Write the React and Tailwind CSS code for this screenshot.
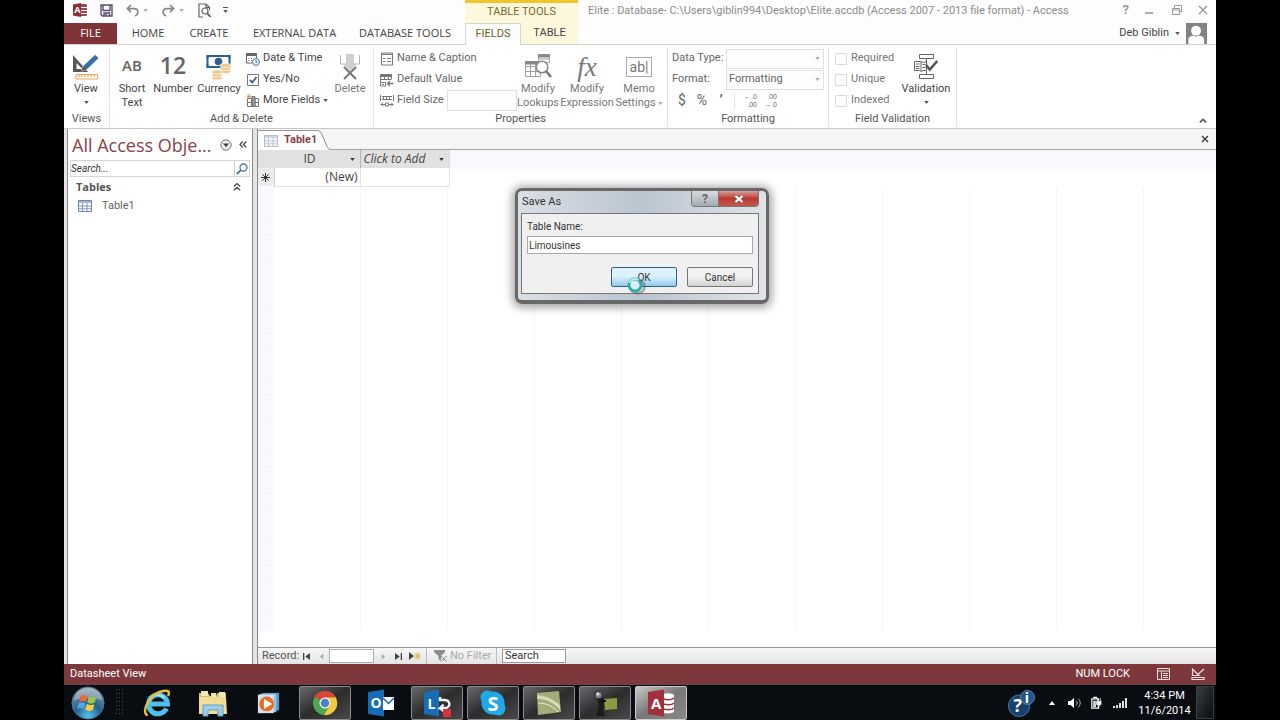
import React from "react";

function Caret({ className = "fill-[#555]" }) {
  return (
    <svg viewBox="0 0 6 4" className={"h-[3px] w-[5px] shrink-0 " + className} aria-hidden="true">
      <path d="M0 0h6L3 4z" />
    </svg>
  );
}

/* ---------- Title bar icons ---------- */

function AccessSmall() {
  return (
    <svg viewBox="0 0 16 14" className="h-[14px] w-4" aria-hidden="true">
      <g fill="#8f4a4f">
        <path d="M9 1h5l1 1v2H9zM9 5h6v2H9zM9 8h6v2H9zM9 11h6v1l-1 1H9z" />
      </g>
      <path d="M1 1.5 9 0v14l-8-1.5z" fill="#8c2f37" />
      <text x="2.2" y="10.4" fontSize="9" fontWeight="700" fill="#fff" fontFamily="Open Sans, sans-serif">A</text>
    </svg>
  );
}

function SaveIcon() {
  return (
    <svg viewBox="0 0 13 13" className="h-[13px] w-[13px]" fill="none" stroke="#5b4d6e" strokeWidth="1.4" aria-hidden="true">
      <path d="M1 1h11v11H2.5L1 10.5zM3 1v5.5h7V1M4 12V9h5.5v3" />
      <path d="M5.2 9.4h1.6v2.2H5.2z" fill="#5b4d6e" stroke="none" />
    </svg>
  );
}

function UndoIcon({ flip }) {
  return (
    <svg viewBox="0 0 13 13" className={"h-[13px] w-[13px] " + (flip ? "-scale-x-100" : "")} fill="none" stroke="#8a8790" strokeWidth="1.7" aria-hidden="true">
      <path d="M5 1 1.4 4.6 5 8.2M1.6 4.6H8c5 0 5 5.5 1 7.4" />
    </svg>
  );
}

function PreviewIcon() {
  return (
    <svg viewBox="0 0 13 15" className="h-[15px] w-[13px]" fill="none" stroke="#666" strokeWidth="1.2" aria-hidden="true">
      <path d="M5 14H1V1h7l3.5 3.5V7M8 1v3.5h3" />
      <circle cx="7" cy="8" r="3" />
      <path d="m9.3 10.3 3.2 3.6" strokeWidth="1.8" />
    </svg>
  );
}

/* ---------- Ribbon icons ---------- */

function ViewIcon() {
  return (
    <svg viewBox="0 0 28 28" className="h-7 w-7" aria-hidden="true">
      <path d="M1 2v17h15zM4.5 10l6 6h-6z" fill="#55565a" fillRule="evenodd" />
      <path d="m9.500 18 1.500-5L23 1.500l4 3.500-12 11.500z" fill="#3b6ea5" stroke="#fff" strokeWidth=".7" />
      <path d="m9.500 18 1.500-5 3.800 3.500z" fill="#5c5c5c" />
      <path d="M4 21.500h21.500v4.500H4z" fill="#fff8ee" stroke="#e2a96b" />
      <path d="M7 22v2M10 22v2M13 22v2M16 22v2M19 22v2M22 22v2" stroke="#d99a56" />
    </svg>
  );
}

function CurrencyIcon() {
  return (
    <svg viewBox="0 0 28 28" className="h-7 w-7" aria-hidden="true">
      <path d="M2.500 3h22v11h-22z" fill="#fff" stroke="#2f5f95" strokeWidth="2" />
      <path d="M1.500 2h5l-5 4.500zM25.500 2h-5l5 4.500zM1.500 15h5l-5-4.500z" fill="#2f5f95" />
      <circle cx="13.500" cy="8.500" r="3.800" fill="#2f5f95" />
      <g fill="#edc98d" stroke="#fff" strokeWidth=".7">
        <ellipse cx="20.500" cy="18.500" rx="5.500" ry="2.100" />
        <ellipse cx="20.500" cy="15.500" rx="5.500" ry="2.100" />
        <ellipse cx="20.500" cy="12.500" rx="5.500" ry="2.100" />
        <ellipse cx="12" cy="25" rx="5.500" ry="2" />
        <ellipse cx="12" cy="22" rx="5.500" ry="2" />
        <ellipse cx="12" cy="19" rx="5.500" ry="2" />
      </g>
    </svg>
  );
}

function DateIcon() {
  return (
    <svg viewBox="0 0 14 14" className="h-[14px] w-[14px] shrink-0" fill="none" stroke="#666" aria-hidden="true">
      <path d="M.5 1.500h10v2H.5z" fill="#666" />
      <path d="M.5 1.500v9.500H6M10.500 4v2M2.500 6.500h1M5 6.500h1M2.500 8.500h1M5 8.500h1" />
      <circle cx="10" cy="10" r="3.400" stroke="#3b6ea5" fill="#fff" />
      <path d="M10 8v2.300h1.600" stroke="#3b6ea5" />
    </svg>
  );
}

function CheckBoxIcon() {
  return (
    <svg viewBox="0 0 14 14" className="h-[14px] w-[14px] shrink-0" fill="none" aria-hidden="true">
      <path d="M1.500 1.500h11v11h-11z" stroke="#777" />
      <path d="m4 6.800 2.200 2.700L10.500 4" stroke="#3a5f8a" strokeWidth="1.800" />
    </svg>
  );
}

function MoreFieldsIcon() {
  return (
    <svg viewBox="0 0 14 14" className="h-[14px] w-[14px] shrink-0" fill="none" stroke="#777" aria-hidden="true">
      <path d="M1.500 4.500h11v8h-11zM5.500 4v8M9 4v8M2 8.500h10" />
      <path d="M6 2.500h3V12H6z" fill="#999" />
      <path d="M3 0v5M.5 2.500h5M1.200.8l3.600 3.400M4.800.8 1.200 4.200" stroke="#b98a55" strokeWidth=".7" />
    </svg>
  );
}

function DeleteIcon() {
  return (
    <svg viewBox="0 0 24 28" className="h-7 w-6" fill="none" aria-hidden="true">
      <path d="M2.500 2v9H8M21.500 2v9H16" stroke="#b5b5b5" />
      <path d="M8 1h8v10h3l-7 7-7-7h3z" fill="#cfcfcf" />
      <path d="m6 14 12 12M18 14 6 26" stroke="#777" strokeWidth="2" />
    </svg>
  );
}

function CaptionIcon() {
  return (
    <svg viewBox="0 0 14 14" className="h-[14px] w-[14px] shrink-0" fill="none" stroke="#777" aria-hidden="true">
      <path d="M1.500 1h11v12h-11zM1.500 2.500h11M3 6.500h2.500M7 6.500h4M3 9.500h2.500M7 9.500h4" />
    </svg>
  );
}

function DefaultIcon() {
  return (
    <svg viewBox="0 0 14 14" className="h-[14px] w-[14px] shrink-0" fill="none" stroke="#777" aria-hidden="true">
      <path d="M.5 1.500h11v2H.5z" fill="#777" />
      <path d="M.5 3v6M4.500 3v4M8.500 3v4M11.500 3v3M.5 6.500h11M.5 9.500h5v3.500h-5zM2 11.300h2" />
      <path d="M13.500 10.500H8M10 8l-2.500 2.500L10 13" strokeWidth="1.300" />
    </svg>
  );
}

function SizeIcon() {
  return (
    <svg viewBox="0 0 14 14" className="h-[14px] w-[14px] shrink-0" fill="none" stroke="#777" aria-hidden="true">
      <path d="M.5 1v6M13.500 1v6M2 2.500h10M2 5.500h10M3.500 2v3M6.500 2v3M9.500 2v3" />
      <path d="M1 10.500h4M9 10.500h4M3 8.500l-2 2 2 2M11 8.500l2 2-2 2M5.500 9h3v3h-3z" />
    </svg>
  );
}

function LookupIcon() {
  return (
    <svg viewBox="0 0 28 28" className="h-7 w-7" fill="none" stroke="#a0a0a0" aria-hidden="true">
      <path d="M14.500 1.500h11v8h-11zM14.500 6h11" />
      <path d="M14.500 1.500h11v2.500h-11z" fill="#888" stroke="#888" />
      <path d="M1.500 8.500h15v15h-15zM1.500 13.500h15M1.500 18.500h15M6.500 9v14M11.500 9v14" />
      <path d="M1.500 8.500h13v2.500h-13z" fill="#888" stroke="#888" />
      <circle cx="18" cy="14" r="5.800" fill="#fff" stroke="#888" strokeWidth="1.600" />
      <path d="m22 18 5 6" stroke="#777" strokeWidth="2.500" />
    </svg>
  );
}

function ValidationIcon() {
  return (
    <svg viewBox="0 0 28 28" className="h-7 w-7" fill="none" stroke="#666" aria-hidden="true">
      <path d="M7.500 1.500h14v4h-14zM7.500 21.500h14v4h-14zM14.500 6v4M14.500 18v3.500" fill="#fff" />
      <path d="M2.500 8.500h6l3 1 3-1v9h-3l-2 1-2-1h-5zM9 9v9M4 11h3.500M4 13.500h3.500M4 15.500h3.500M10.500 11.500h3M10.500 14.500h3" />
      <path d="m14 12 3.800 4.500 7.500-8.500" stroke="#555" strokeWidth="2.600" />
    </svg>
  );
}

/* ---------- Ribbon building blocks ---------- */

function BigButton({ icon, label, width, muted, menu }) {
  return (
    <button type="button" className={"flex flex-col items-center pt-1 leading-[14px] " + width + (muted ? " text-[#777]" : "")}>
      <span className="flex h-[30px] items-center justify-center">{icon}</span>
      {label.map((line) => (
        <span key={line} className="flex items-center gap-[2px] whitespace-nowrap">
          {line}
          {menu === line && <Caret className="fill-[#aaa]" />}
        </span>
      ))}
      {menu === true && <span className="flex h-[13px] items-center"><Caret /></span>}
    </button>
  );
}

function SmallButton({ icon, label, muted, menu }) {
  return (
    <button type="button" className={"flex h-[21px] items-center gap-[3px] whitespace-nowrap " + (muted ? "text-[#666]" : "")}>
      {icon}
      {label}
      {menu && <Caret />}
    </button>
  );
}

function Group({ title, width, children }) {
  return (
    <section className={"flex shrink-0 flex-col pt-[3px] pb-px " + width}>
      <div className="flex flex-1 border-r border-[#e2e2e2]">{children}</div>
      <h2 className="h-4 border-r border-[#e2e2e2] text-center leading-4 text-[#555]">{title}</h2>
    </section>
  );
}

function DropDown({ id, value }) {
  return (
    <div className="relative h-[20px] w-[98px] shrink-0">
      <select id={id} className="h-full w-full appearance-none border border-[#e0e0e0] bg-[#fdfdfd] px-[2px] text-[11px] text-[#666]" defaultValue={value}>
        <option>{value}</option>
      </select>
      <span className="pointer-events-none absolute top-2 right-1 flex"><Caret className="fill-[#aaa]" /></span>
    </div>
  );
}

function Header() {
  return (
    <header className="flex h-[45px] border-b border-[#d0d0d0] bg-[#fdfdfd]">
      <div className="flex w-[401px] shrink-0 flex-col">
        <div className="flex h-[23px] items-center pb-[3px] pl-2">
          <AccessSmall />
          <button type="button" aria-label="Save" className="ml-3"><SaveIcon /></button>
          <button type="button" aria-label="Undo" className="ml-[13px] flex items-center gap-1"><UndoIcon /><Caret className="fill-[#aaa]" /></button>
          <button type="button" aria-label="Redo" className="ml-[14px] flex items-center gap-1"><UndoIcon flip /><Caret className="fill-[#aaa]" /></button>
          <button type="button" aria-label="Print Preview" className="ml-[14px]"><PreviewIcon /></button>
          <button type="button" aria-label="Customize toolbar" className="ml-3 flex flex-col items-center gap-[2px]">
            <span className="h-px w-[5px] bg-[#555]" />
            <Caret />
          </button>
        </div>
        <nav className="flex flex-1 font-['Open_Sans',sans-serif] text-[#444]">
          <button type="button" className="w-[53px] bg-[#80343a] text-white">FILE</button>
          <button type="button" className="ml-[2px] w-[58px]">HOME</button>
          <button type="button" className="w-16">CREATE</button>
          <button type="button" className="w-[107px]">EXTERNAL DATA</button>
          <button type="button" className="w-[114px]">DATABASE TOOLS</button>
        </nav>
      </div>
      <div className="flex w-[113px] shrink-0 flex-col border-t-[3px] border-[#f0c52e] bg-[#fdf8dc]">
        <div className="h-5 text-center leading-[18px] text-[#7a6a2a]">TABLE TOOLS</div>
        <div className="flex h-[22px]">
          <button type="button" className="-mb-px h-[22px] w-14 border border-b-0 border-[#d5d5d5] bg-[#fdfdfd] text-[#6e5f25]">FIELDS</button>
          <button type="button" className="flex-1 text-[#444]">TABLE</button>
        </div>
      </div>
      <div className="flex flex-1 flex-col">
        <div className="flex h-[23px] items-center pr-2 pl-[10px]">
          <h1 className="flex-1 whitespace-nowrap text-[#8c8c8c]">
            Elite : Database- C:\Users\giblin994\Desktop\Elite.accdb (Access 2007 - 2013 file format) - Access
          </h1>
          <div className="flex items-center gap-4 pb-1 text-[#999]">
            <button type="button" aria-label="Help" className="text-[13px] leading-4 font-bold">?</button>
            <button type="button" aria-label="Minimize" className="flex h-2 w-[10px] items-end">
              <span className="h-[2px] w-2 bg-[#aaa]" />
            </button>
            <button type="button" aria-label="Restore">
              <svg viewBox="0 0 11 10" className="h-[10px] w-[11px]" fill="none" stroke="#999"><path d="M1.500 3.500h7v6h-7zM1.500 5h7M3.500 3V.5h7v6H9" /></svg>
            </button>
            <button type="button" aria-label="Close">
              <svg viewBox="0 0 10 10" className="h-[10px] w-[10px]" stroke="#999" strokeWidth="1.400"><path d="m1 1 8 8M9 1 1 9" /></svg>
            </button>
          </div>
        </div>
        <button type="button" className="flex h-[21px] items-center justify-end pr-[9px] text-[#444]">
          <span className="mr-[6px]">Deb Giblin</span>
          <Caret />
          <svg viewBox="0 0 22 22" className="ml-[6px] h-[21px] w-[21px]" aria-hidden="true">
            <path d="M0 0h22v22H0z" fill="#828282" />
            <circle cx="10.500" cy="8" r="5.200" fill="#fff" />
            <path d="M2.500 22v-5c0-2.500 3-3.500 5-4l3 1.500 3-1.500c3 .5 5.500 1.500 5.500 4v5z" fill="#fff" />
          </svg>
        </button>
      </div>
    </header>
  );
}

function Ribbon() {
  return (
    <div className="flex h-[84px] border-b border-[#c9c9c9] bg-white text-[#444]">
      <Group title="Views" width="w-[46px]">
        <BigButton icon={<ViewIcon />} label={["View"]} width="w-[44px]" menu />
      </Group>
      <Group title="Add & Delete" width="w-[264px]">
        <BigButton icon={<span className="pb-1 font-['Open_Sans',sans-serif] text-[15px] font-semibold text-[#666]">AB</span>} label={["Short", "Text"]} width="ml-1 w-[36px]" />
        <BigButton icon={<span className="pb-1 font-['Open_Sans',sans-serif] text-[23px] font-semibold text-[#666]">12</span>} label={["Number"]} width="w-[46px]" />
        <BigButton icon={<CurrencyIcon />} label={["Currency"]} width="w-[46px]" />
        <div className="ml-1 w-[81px]">
          <SmallButton icon={<DateIcon />} label="Date & Time" />
          <SmallButton icon={<CheckBoxIcon />} label="Yes/No" />
          <SmallButton icon={<MoreFieldsIcon />} label="More Fields" menu />
        </div>
        <BigButton icon={<DeleteIcon />} label={["Delete"]} width="ml-1 w-[38px]" muted />
      </Group>
      <Group title="Properties" width="w-[294px]">
        <div className="ml-[6px] w-[136px]">
          <SmallButton icon={<CaptionIcon />} label="Name & Caption" muted />
          <SmallButton icon={<DefaultIcon />} label="Default Value" muted />
          <div className="flex h-[21px] items-center gap-[3px] text-[#666]">
            <SizeIcon />
            <label htmlFor="field-size" className="whitespace-nowrap">Field Size</label>
            <input id="field-size" className="mr-[2px] ml-auto h-[21px] w-[70px] border border-[#e0e0e0] bg-[#fdfdfd]" />
          </div>
        </div>
        <BigButton icon={<LookupIcon />} label={["Modify", "Lookups"]} width="w-[44px]" muted />
        <BigButton icon={<span className="font-['Liberation_Serif',serif] text-[27px] italic">fx</span>} label={["Modify", "Expression"]} width="w-[54px]" muted />
        <BigButton icon={<span className="flex h-5 w-[26px] items-center justify-center border border-[#aaa] text-[14px]">ab|</span>} label={["Memo", "Settings"]} width="w-[50px]" muted menu="Settings" />
      </Group>
      <Group title="Formatting" width="w-[161px]">
        <div className="ml-1 flex-1 pr-1 text-[#666]">
          <div className="flex h-[21px] items-center justify-between">
            <label htmlFor="data-type" className="whitespace-nowrap">Data Type:</label>
            <DropDown id="data-type" value="" />
          </div>
          <div className="flex h-[21px] items-center justify-between">
            <label htmlFor="format">Format:</label>
            <DropDown id="format" value="Formatting" />
          </div>
          <div className="flex h-[21px] items-center">
            <button type="button" aria-label="Currency" className="w-5 text-[14px]">$</button>
            <button type="button" aria-label="Percent" className="w-5 text-[14px]">%</button>
            <button type="button" aria-label="Comma" className="w-[18px] text-[14px] font-bold">’</button>
            <span className="mx-1 h-4 w-px bg-[#e2e2e2]" />
            <button type="button" aria-label="Increase Decimals" className="flex w-[18px] flex-col items-end font-['Liberation_Sans',sans-serif] text-[7px] leading-[8px]"><span>←.0</span><span>.00</span></button>
            <button type="button" aria-label="Decrease Decimals" className="flex w-5 flex-col items-end font-['Liberation_Sans',sans-serif] text-[7px] leading-[8px]"><span>.00</span><span>→.0</span></button>
          </div>
        </div>
      </Group>
      <Group title="Field Validation" width="w-[128px]">
        <div className="ml-[6px] w-[66px]">
          {["Required", "Unique", "Indexed"].map((t) => (
            <label key={t} className="flex h-[21px] items-center gap-1 text-[#777]">
              <input type="checkbox" className="h-3 w-3 appearance-none border border-[#dcdcdc] bg-[#fdfdfd]" />
              {t}
            </label>
          ))}
        </div>
        <BigButton icon={<ValidationIcon />} label={["Validation"]} width="w-[50px]" menu />
      </Group>
      <button type="button" aria-label="Collapse Ribbon" className="mr-[9px] mb-[5px] ml-auto self-end">
        <svg viewBox="0 0 8 5" className="h-[5px] w-2" fill="none" stroke="#555" strokeWidth="1.500"><path d="m.8 4.400 3.200-3 3.200 3" /></svg>
      </button>
    </div>
  );
}

function GridIcon({ className }) {
  return (
    <svg viewBox="0 0 14 12" className={"h-3 w-[14px] shrink-0 " + className} aria-hidden="true">
      <path d="M.5.5h13v11H.5z" fill="#f7fafd" stroke="currentColor" />
      <path d="M1 1h12v2H1z" fill="currentColor" opacity=".6" />
      <path d="M1 6h12M1 8.800h12M4.500 3v8.500M9 3v8.500" stroke="currentColor" strokeWidth=".8" />
    </svg>
  );
}

function NavigationPane() {
  return (
    <aside className="ml-[3px] flex w-[186px] shrink-0 flex-col border-x border-[#8a8a8a] bg-white">
      <div className="flex h-[31px] items-center pl-1">
        <h2 className="w-[145px] pt-[2px] font-['Open_Sans',sans-serif] text-[18px] whitespace-nowrap text-[#8a4248]">All Access Obje...</h2>
        <button type="button" aria-label="Filter objects" className="ml-[3px]">
          <svg viewBox="0 0 12 12" className="h-3 w-3"><circle cx="6" cy="6" r="5.200" fill="#eee" stroke="#777" /><path d="M3 4.500h6L6 8.200z" fill="#444" /></svg>
        </button>
        <button type="button" aria-label="Collapse pane" className="ml-[7px]">
          <svg viewBox="0 0 8 7" className="h-[7px] w-2" fill="none" stroke="#444" strokeWidth="1.200"><path d="M3.800.5 1 3.500l2.800 3M7.300.5l-2.800 3 2.800 3" /></svg>
        </button>
      </div>
      <div className="mr-[2px] ml-[2px] flex h-[17px] border border-[#d4d4d4]">
        <input aria-label="Search" placeholder="Search..." className="min-w-0 flex-1 text-[10px] italic placeholder:text-[#333]" />
        <button type="button" aria-label="Run search" className="flex w-[15px] items-center justify-center border-l border-[#d4d4d4]">
          <svg viewBox="0 0 12 12" className="h-3 w-3" fill="none" stroke="#4c7aa5"><circle cx="7.500" cy="4.500" r="3.500" strokeWidth="1.300" /><path d="m5 7-4 4" strokeWidth="2" /></svg>
        </button>
      </div>
      <button type="button" className="flex h-[20px] items-center justify-between pr-[11px] pl-2 font-['Open_Sans',sans-serif] font-bold text-[#555]">
        Tables
        <svg viewBox="0 0 8 8" className="h-2 w-2" fill="none" stroke="#444" strokeWidth="1.200"><path d="m.8 3.500 3.200-3 3.200 3M.8 7.300 4 4.300l3.200 3" /></svg>
      </button>
      <button type="button" className="flex h-[18px] items-center gap-[10px] pl-[10px] text-[#666]">
        <GridIcon className="text-[#6f86a0]" />
        Table1
      </button>
    </aside>
  );
}

function Datasheet() {
  return (
    <main className="ml-1 flex min-w-0 flex-1 flex-col border-l border-[#8a8a8a] bg-white">
      <div className="flex h-[21px] items-end justify-between border-b border-[#a5a5a5] bg-[#f5f5f5]">
        <div className="-mb-px flex h-5">
          <button type="button" className="flex h-5 items-center gap-[6px] border-t border-[#999] bg-white pl-[6px] font-bold text-[#8a3f45]">
            <GridIcon className="text-[#b9bcc4]" />
            Table1
          </button>
          <svg viewBox="0 0 14 20" className="h-5 w-[14px]" aria-hidden="true">
            <path d="M0 .5c3 0 4 2 5 4l5 12c1 2 2 3 4 3V20H0z" fill="#fff" />
            <path d="M0 .5c3 0 4 2 5 4l5 12c1 2 2 3 4 3" fill="none" stroke="#888" />
          </svg>
        </div>
        <button type="button" aria-label="Close Table1" className="mr-[7px] mb-[6px]">
          <svg viewBox="0 0 8 8" className="h-2 w-2" stroke="#333" strokeWidth="1.300"><path d="m1 1 6 6M7 1 1 7" /></svg>
        </button>
      </div>
      <div className="flex flex-1 flex-col">
        <div className="flex bg-linear-to-b from-[#f9f9fd] from-50% to-white to-50%">
          <table className="w-[192px] table-fixed border-collapse font-['Open_Sans',sans-serif] text-[12px] text-[#444]">
            <thead>
              <tr className="h-[18px] bg-[#e1e1e1]">
                <th className="w-4 p-0" aria-label="Row selector" />
                <th className="w-[86px] border-r border-[#b5b5b5] p-0 font-normal">
                  <div className="flex items-center justify-end gap-[34px] pr-[5px] leading-4">ID<Caret className="fill-[#333]" /></div>
                </th>
                <th className="p-0 font-normal italic">
                  <div className="flex items-center justify-between pr-[6px] pl-[3px] leading-4 whitespace-nowrap">Click to Add<Caret className="fill-[#333]" /></div>
                </th>
              </tr>
            </thead>
            <tbody>
              <tr className="h-[18px] bg-white">
                <td className="border-r border-[#ccc] bg-[#ececec] p-0">
                  <svg viewBox="0 0 9 9" className="mx-auto h-[9px] w-[9px]" stroke="#333"><path d="M4.500 0v9M0 4.500h9M1.300 1.300l6.400 6.400M7.700 1.300 1.300 7.700" /></svg>
                </td>
                <td className="border-r border-b border-[#e3e3e3] p-0 pr-[2px] text-right leading-4">(New)</td>
                <td className="border-r border-b border-[#e3e3e3] p-0" />
              </tr>
            </tbody>
          </table>
        </div>
        <div className="flex min-h-[200px] flex-1 pb-4">
          <div className="flex w-4 shrink-0 flex-col divide-y divide-[#f3f3f8] bg-[#f9f9fd]">
            {Array.from({ length: 25 }, (_, i) => <div key={i} className="flex-1" />)}
          </div>
          {Array.from({ length: 10 }, (_, i) => (
            <div key={i} className="w-[87px] border-r border-[#f7f7fa]" />
          ))}
        </div>
      </div>
      <RecordBar />
    </main>
  );
}

function RecordBar() {
  const back = [
    ["First record", "M0 0h1.500v8H0zM8 0v8L2.500 4z", "fill-[#444]"],
    ["Previous record", "M6 1v6L2 4z", "fill-[#aaa]"],
  ];
  const forward = [
    ["Next record", "M2 1v6l4-3z", "fill-[#aaa]"],
    ["Last record", "M0 0v8l5.500-4zM6.500 0H8v8H6.500z", "fill-[#444]"],
  ];
  const draw = ([name, d, fill]) => (
    <button key={name} type="button" aria-label={name} className="flex w-[15px] justify-center">
      <svg viewBox="0 0 8 8" className={"h-[7px] w-[7px] " + fill}><path d={d} /></svg>
    </button>
  );
  return (
    <div className="flex h-[17px] shrink-0 items-center border-t border-[#999] bg-linear-to-b from-[#f7f7f7] to-[#e4e4e4] pl-1 text-[#555]">
      <label htmlFor="record" className="w-[37px]">Record:</label>
      {back.map(draw)}
      <input id="record" className="h-[14px] w-[45px] border border-[#aaa] bg-white" />
      <span className="w-[2px]" />
      {forward.map(draw)}
      <button type="button" aria-label="New record" className="flex w-[18px] justify-center">
        <svg viewBox="0 0 12 8" className="h-2 w-3"><path d="M0 0v8l5-4z" fill="#444" /><path d="M8.500 0v8M5 4h7M6 1.200l5 5.600M11 1.200 6 6.800" stroke="#dcb84a" /></svg>
      </button>
      <span className="mr-[7px] ml-[2px] h-full w-px bg-[#bbb]" />
      <span className="flex items-center gap-[3px] text-[#aaa]">
        <svg viewBox="0 0 13 12" className="h-3 w-[13px]"><path d="M0 0h11v2L7 6v5L4.500 9V6L0 2z" fill="#8c8c8c" /><path d="m7 6 5.500 5.500M12.500 6 7 11.500" stroke="#888" /></svg>
        <span className="w-[42px] whitespace-nowrap">No Filter</span>
      </span>
      <span className="mr-[5px] ml-1 h-full w-px bg-[#bbb]" />
      <input aria-label="Search records" defaultValue="Search" className="h-[14px] w-[64px] border border-[#999] bg-white px-[2px] text-[#333]" />
    </div>
  );
}

function StatusBar() {
  return (
    <footer className="flex h-5 shrink-0 items-center bg-[#7d383c] px-[6px] text-white">
      <span>Datasheet View</span>
      <span className="mr-[27px] ml-auto">NUM LOCK</span>
      <button type="button" aria-label="Datasheet View">
        <svg viewBox="0 0 13 12" className="h-3 w-[13px]" fill="none" stroke="#f2dcdc"><path d="M.5.5h12v11H.5zM.5 3h12M4.500 3v8.500M6 5.500h5M6 7.500h5M6 9.500h5" /></svg>
      </button>
      <button type="button" aria-label="Design View" className="mr-[5px] ml-[21px]">
        <svg viewBox="0 0 14 12" className="h-3 w-[14px]" fill="none" stroke="#f2dcdc"><path d="M1.500 1v6.500H8zM13 1 7 6.500M1 9.500h12v2H1z" strokeWidth="1.200" /></svg>
      </button>
    </footer>
  );
}

/* ---------- Taskbar ---------- */

function WindowsOrb() {
  return (
    <svg viewBox="0 0 36 36" className="h-[34px] w-[34px]" aria-hidden="true">
      <defs>
        <radialGradient id="orb" cx=".5" cy=".9" r=".9">
          <stop offset="0" stopColor="#4fc3ee" /><stop offset=".45" stopColor="#24618f" /><stop offset="1" stopColor="#8aa0ae" />
        </radialGradient>
      </defs>
      <circle cx="18" cy="18" r="17" fill="url(#orb)" stroke="#5f7484" />
      <path d="M3 15C5 5 13 2 18 2s13 3 15 13C25 12 12 12 3 15z" fill="#fff" opacity=".3" />
      <path d="M10 10.500c3-1.500 5-1.300 7.500.2L15.800 17c-2.500-1.500-4.500-1.600-7.500-.3z" fill="#ef6a30" />
      <path d="M18.800 11.300c2.500 1.500 5 1.500 8 .2l-1.800 6.300c-3 1.300-5.400 1.100-7.900-.3z" fill="#9cc93f" />
      <path d="M8 18c3-1.300 5-1.200 7.500.3l-1.700 6.200c-2.500-1.500-4.700-1.500-7.500-.3z" fill="#4fa5e2" />
      <path d="M16.700 19c2.500 1.500 5 1.600 8 .3L23 25.500c-3 1.300-5.500 1.200-8-.3z" fill="#fbcf3b" />
    </svg>
  );
}

function ExplorerE() {
  return (
    <svg viewBox="0 0 30 30" className="h-[30px] w-[30px]" fill="none" aria-hidden="true">
      <path d="M24.500 20.500A9.500 9.500 0 1 1 25.500 16H9" stroke="#4fbfe9" strokeWidth="5" />
      <path d="M22.500 10A9.500 9.500 0 0 0 8 10.500" stroke="#a5e3f7" strokeWidth="2" />
      <path d="M5.500 27.500C-2 23 9 5 21 3c6-1 7 1 5 5" stroke="#e9bf38" strokeWidth="2.400" />
    </svg>
  );
}

function FolderIcon() {
  return (
    <svg viewBox="0 0 30 28" className="h-7 w-[30px]" aria-hidden="true">
      <path d="M1 4h9l2 3h6l1-3h9v20H1z" fill="#d9bd6a" />
      <path d="M3 2h7v5H3zM13 4h5v4h-5zM21 3h6v5h-6z" fill="#eee4bd" />
      <path d="M1 8h27l1 17H1z" fill="#f2dd98" />
      <path d="M5 16h20v11h-5v-6H10v6H5z" fill="#9fcde6" stroke="#5f9fc4" />
    </svg>
  );
}

function MediaIcon() {
  return (
    <svg viewBox="0 0 26 26" className="h-6 w-[26px]" aria-hidden="true">
      <path d="M6 2h18v19H6z" fill="#5d93bf" /><path d="M3 3h18v20H3z" fill="#9fc4df" /><path d="M1 4h17v20H1z" fill="#d4e2ec" />
      <circle cx="10.500" cy="14" r="8" fill="#e66d22" />
      <path d="M7.500 8.500v11l9-5.500z" fill="#fff" />
    </svg>
  );
}

function ChromeIcon() {
  return (
    <svg viewBox="0 0 28 28" className="h-[26px] w-[26px]" aria-hidden="true">
      <circle cx="14" cy="14" r="13" fill="#4fa653" />
      <path d="M14 14 2.700 7.500A13 13 0 0 1 25.300 7.500L25.600 8H14z" fill="#dc4437" />
      <path d="M14 8h11.600A13 13 0 0 1 13 27l6-10z" fill="#f4c83d" />
      <circle cx="14" cy="14" r="6" fill="#f4f4f4" />
      <circle cx="14" cy="14" r="4.600" fill="#4a84c7" />
    </svg>
  );
}

function OutlookIcon() {
  return (
    <svg viewBox="0 0 28 28" className="h-7 w-7" aria-hidden="true">
      <path d="M1 3 17 .5v27L1 25z" fill="#176db5" />
      <path d="M16 8h11v13H16z" fill="#fff" />
      <path d="m16 9 5.500 5.500L27 9" fill="none" stroke="#176db5" strokeWidth="1.500" />
      <text x="3.500" y="19" fontSize="14" fontWeight="700" fill="#fff" fontFamily="Open Sans, sans-serif">O</text>
    </svg>
  );
}

function LyncIcon() {
  return (
    <svg viewBox="0 0 28 28" className="h-7 w-7" aria-hidden="true">
      <path d="M1 3 16 .5v27L1 25z" fill="#176db5" />
      <path d="M17 8v3h4c7 0 7 8 1 8h-5l3.500-3.500M17 19l3.500 3" fill="none" stroke="#eef4f8" strokeWidth="2.400" />
      <path d="M20 20h8v8h-8z" fill="#d9343e" />
      <text x="4.500" y="20" fontSize="14" fontWeight="700" fill="#fff" fontFamily="Open Sans, sans-serif">L</text>
    </svg>
  );
}

function SkypeIcon() {
  return (
    <svg viewBox="0 0 28 28" className="h-7 w-7" aria-hidden="true">
      <circle cx="14" cy="14" r="11.500" fill="#1fa9e6" /><circle cx="8.500" cy="8.500" r="7" fill="#1fa9e6" /><circle cx="19.500" cy="19.500" r="7" fill="#1fa9e6" />
      <text x="14" y="21.500" textAnchor="middle" fontSize="20" fontWeight="700" fill="#fff" fontFamily="Open Sans, sans-serif">S</text>
    </svg>
  );
}

function GreenIcon() {
  return (
    <svg viewBox="0 0 26 26" className="h-[26px] w-[26px]" aria-hidden="true">
      <path d="m1 3 22-2 2 21-23 3z" fill="#a3ad77" />
      <path d="M1 5c8 0 17 4 23 10v5C17 11 8 9 1 9z" fill="#c9d0a4" />
      <path d="M2 13c9 0 16 4 20 9M2 7c9 1 17 5 22 11" fill="none" stroke="#edf0dc" />
    </svg>
  );
}

function RecorderIcon() {
  return (
    <svg viewBox="0 0 28 28" className="h-7 w-7" aria-hidden="true">
      <path d="m13 10 13-1v11l-12 1z" fill="#8c9b42" />
      <path d="M6 9c4-3 8 0 7 4l-1 7 2 7H5l3-9z" fill="#191c1b" />
      <circle cx="7.500" cy="6" r="4" fill="#7a8085" stroke="#222" /><circle cx="7" cy="5" r="1.500" fill="#d7dde0" />
      <path d="M10 12h5" stroke="#111" strokeWidth="2" />
    </svg>
  );
}

function AccessTask() {
  return (
    <svg viewBox="0 0 28 28" className="h-7 w-7" aria-hidden="true">
      <path d="M16 5c6-2 11 0 11 1v16c0 2-5 3-11 2z" fill="#fff" />
      <path d="M16 10c4 1 9 1 11-1M16 15c4 1 9 1 11-1M16 20c4 1 9 1 11-1" fill="none" stroke="#a03540" strokeWidth="1.600" />
      <path d="M1 3 17 .5v27L1 25z" fill="#a3303b" />
      <text x="4" y="20" fontSize="15" fontWeight="700" fill="#fff" fontFamily="Open Sans, sans-serif">A</text>
    </svg>
  );
}

function Task({ name, icon, open, active }) {
  const look = active
    ? "border border-[#ccc] bg-linear-to-br from-[#c9c9c9] via-[#777] to-[#8a8a8a]"
    : open
      ? "border border-[#8b8b8b] bg-linear-to-br from-[#6a6a6a] via-[#2c2c2c] to-[#4a4a4a]"
      : "";
  return (
    <button type="button" aria-label={name} className={"mx-[2px] flex h-[34px] w-[52px] items-center justify-center rounded-[2px] " + look}>
      {icon}
    </button>
  );
}

function Taskbar() {
  return (
    <div className="flex h-9 shrink-0 items-center border-t border-[#5f4a4c] bg-[#090d12] text-white">
      <button type="button" aria-label="Start" className="ml-[7px]"><WindowsOrb /></button>
      <svg viewBox="0 0 9 28" className="ml-[10px] h-7 w-[9px]" stroke="#4a4d52" strokeDasharray="1 3"><path d="M1.500 0v28M4.500 0v28M7.500 0v28" /></svg>
      <div className="ml-[5px] flex">
        <Task name="Internet Explorer" icon={<ExplorerE />} />
        <Task name="Windows Explorer" icon={<FolderIcon />} />
        <Task name="Media Player" icon={<MediaIcon />} />
        <Task name="Chrome" icon={<ChromeIcon />} open />
        <Task name="Outlook" icon={<OutlookIcon />} />
        <Task name="Lync" icon={<LyncIcon />} open />
        <Task name="Skype" icon={<SkypeIcon />} open />
        <Task name="Camtasia" icon={<GreenIcon />} open />
        <Task name="Recorder" icon={<RecorderIcon />} open />
        <Task name="Access" icon={<AccessTask />} active />
      </div>
      <div className="ml-auto flex h-full items-center">
        <button type="button" aria-label="Help and information">
          <svg viewBox="0 0 30 30" className="h-[28px] w-[28px] overflow-visible">
            <circle cx="13" cy="18" r="11.500" fill="#17406f" stroke="#4f7ba6" />
            <circle cx="22" cy="9" r="7.500" fill="#24568c" stroke="#5d8ab3" />
            <text x="7" y="25" fontSize="19" fontWeight="700" fill="#fff" fontFamily="Open Sans, sans-serif">?</text>
            <text x="19" y="15" fontSize="15" fontWeight="700" fill="#fff" fontFamily="Open Sans, sans-serif">i</text>
          </svg>
        </button>
        <button type="button" aria-label="Show hidden icons" className="ml-[14px]">
          <svg viewBox="0 0 6 4" className="h-1 w-[6px] fill-white"><path d="M0 4h6L3 0z" /></svg>
        </button>
        <button type="button" aria-label="Volume" className="ml-[13px]">
          <svg viewBox="0 0 14 12" className="h-3 w-[14px]" fill="none" stroke="#aaa"><path d="M0 4h2.500L6 1v10L2.500 8H0z" fill="#fff" stroke="none" /><path d="M8 3.500c1.500 1.500 1.500 3.500 0 5M10 1.500c3 3 3 6 0 9" /></svg>
        </button>
        <button type="button" aria-label="Power" className="ml-2">
          <svg viewBox="0 0 13 15" className="h-[14px] w-[13px]" fill="none" stroke="#fff"><path d="M3 1.500h4M1.500 3h7v10h-7z" strokeWidth="1.300" /><path d="M3 5h3v7H3z" fill="#ddd" stroke="none" /><path d="M6 5h6v4l-2 1.500H8L6 9z" fill="#fff" stroke="#222" strokeWidth=".5" /><path d="M7.500 5V2.500M10.500 5V2.500M9 10v3.500" /></svg>
        </button>
        <button type="button" aria-label="Network" className="ml-[10px]">
          <svg viewBox="0 0 14 10" className="h-[10px] w-[14px] fill-[#ddd]"><path d="M0 8h2v2H0zM3 7h2v3H3zM6 5h2v5H6zM9 3h2v7H9zM12 0h2v10h-2z" /></svg>
        </button>
        <div className="ml-[10px] w-[55px] text-center leading-[15px] whitespace-nowrap">
          <div>4:34 PM</div>
          <div>11/6/2014</div>
        </div>
        <button type="button" aria-label="Show desktop" className="mr-[2px] ml-1 h-[33px] w-[18px] border border-[#3a3d42] bg-linear-to-br from-[#3a3d42] to-[#0b0d11]" />
      </div>
    </div>
  );
}

function SaveAsDialog() {
  return (
    <form
      aria-label="Save As"
      onSubmit={(e) => e.preventDefault()}
      className="absolute top-[188px] left-[451px] w-[254px] rounded-[7px] border-[3px] border-b-4 border-[#686868] bg-linear-to-r from-[#d9dfe5] via-[#bac5d0] to-[#e0e4e8] px-[3px] pb-[6px] text-[#333] shadow-[0_1px_8px_3px_rgba(0,0,0,0.35)]"
    >
      <div className="flex h-[22px] items-start justify-between pr-1">
        <h2 className="pt-[3px] pl-px leading-4">Save As</h2>
        <div className="flex h-4 w-[68px] overflow-hidden rounded-b border border-t-0 border-[#777]">
          <button type="button" aria-label="Help" className="w-[26px] bg-linear-to-b from-[#d8dce0] to-[#a5aab0] text-[12px] leading-[14px] font-bold text-[#666]">?</button>
          <button type="button" aria-label="Close" className="flex flex-1 items-center justify-center border-l border-[#777] bg-linear-to-b from-[#d99a94] via-[#b93a33] to-[#c9574b]">
            <svg viewBox="0 0 10 8" className="h-2 w-[10px]"><path d="m1.500 1 7 6M8.500 1l-7 6" stroke="#666" strokeWidth="3.400" /><path d="m1.500 1 7 6M8.500 1l-7 6" stroke="#fff" strokeWidth="2.200" /></svg>
          </button>
        </div>
      </div>
      <div className="mr-1 border border-[#777] bg-[#f0f0f0] px-[5px] pt-[6px] pb-[6px] text-[10px]">
        <label htmlFor="table-name" className="block leading-[14px]">Table Name:</label>
        <input id="table-name" defaultValue="Limousines" className="mt-[2px] block h-[18px] w-full border border-[#aaa] bg-white px-px" />
        <div className="mt-[13px] flex justify-end gap-[10px]">
          <button type="submit" className="h-5 w-[66px] rounded-[2px] border border-[#2e6285] bg-linear-to-b from-[#dff1fb] from-45% to-[#90cbee]">OK</button>
          <button type="button" className="h-5 w-[66px] rounded-[2px] border border-[#777] bg-linear-to-b from-[#f2f2f2] from-45% to-[#d2d2d2]">Cancel</button>
        </div>
      </div>
      <svg viewBox="0 0 22 20" className="pointer-events-none absolute top-[84px] left-[107px] h-5 w-[22px]" fill="none" aria-hidden="true">
        <ellipse cx="12.500" cy="11.500" rx="7" ry="6.500" stroke="#445" strokeWidth="3" opacity=".4" />
        <circle cx="10" cy="10" r="6" fill="#d8eef8" stroke="#2fa9a4" strokeWidth="2.800" />
        <path d="M4.500 8a6 6 0 0 1 9-3" stroke="#b8efe9" strokeWidth="2" />
      </svg>
    </form>
  );
}

export default function App() {
  return (
    <div className="flex min-h-screen flex-col bg-black px-16 font-['Roboto','Open_Sans',sans-serif] text-[11px]">
      <div className="relative flex flex-1 flex-col bg-white">
        <Header />
        <Ribbon />
        <div className="flex flex-1 bg-[#e4e4e4]">
          <NavigationPane />
          <Datasheet />
        </div>
        <StatusBar />
        <Taskbar />
        <SaveAsDialog />
      </div>
    </div>
  );
}
